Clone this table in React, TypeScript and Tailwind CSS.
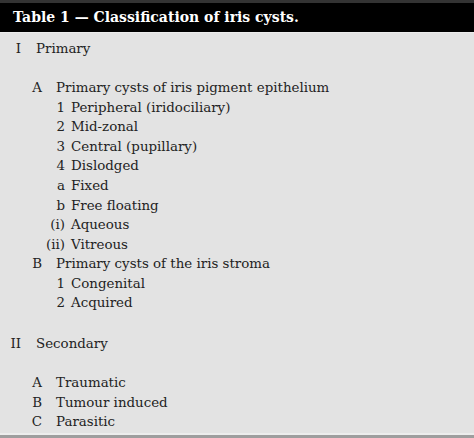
import React from "react";

type Row = { kind: "roman" | "letter" | "num" | "gap"; label?: string; text?: string; h?: string };

const rows: Row[] = [
  { kind: "roman", label: "I", text: "Primary" },
  { kind: "gap" },
  { kind: "letter", label: "A", text: "Primary cysts of iris pigment epithelium" },
  { kind: "num", label: "1", text: "Peripheral (iridociliary)" },
  { kind: "num", label: "2", text: "Mid-zonal" },
  { kind: "num", label: "3", text: "Central (pupillary)" },
  { kind: "num", label: "4", text: "Dislodged" },
  { kind: "num", label: "a", text: "Fixed" },
  { kind: "num", label: "b", text: "Free floating" },
  { kind: "num", label: "(i)", text: "Aqueous" },
  { kind: "num", label: "(ii)", text: "Vitreous" },
  { kind: "letter", label: "B", text: "Primary cysts of the iris stroma" },
  { kind: "num", label: "1", text: "Congenital" },
  { kind: "num", label: "2", text: "Acquired" },
  { kind: "gap", h: "big" },
  { kind: "roman", label: "II", text: "Secondary" },
  { kind: "gap" },
  { kind: "letter", label: "A", text: "Traumatic" },
  { kind: "letter", label: "B", text: "Tumour induced" },
  { kind: "letter", label: "C", text: "Parasitic" },
];

function RowView({ r }: { r: Row }) {
  if (r.kind === "gap")
    return r.h === "big" ? <div className="h-[21px]" /> : <div className="h-[19.6px]" />;
  if (r.kind === "roman")
    return (
      <div className="flex h-[19.6px] items-center">
        <span className="w-[21px] text-right">{r.label}</span>
        <span className="ml-[15px]">{r.text}</span>
      </div>
    );
  if (r.kind === "letter")
    return (
      <div className="flex h-[19.6px] items-center">
        <span className="w-[42px] text-right">{r.label}</span>
        <span className="ml-[14px]">{r.text}</span>
      </div>
    );
  return (
    <div className="flex h-[19.6px] items-center">
      <span className="w-[65px] text-right">{r.label}</span>
      <span className="ml-[6px]">{r.text}</span>
    </div>
  );
}

export default function App() {
  return (
    <div
      className="w-[474px] h-[438px] overflow-hidden bg-[#e3e3e3] flex flex-col"
      style={{ fontFamily: '"DejaVu Serif", serif' }}
    >
      <div className="h-[3px] bg-[#333333]" />
      <div className="h-[29px] bg-black flex items-center pl-[13px] text-white font-bold text-[14px]">
        Table 1 — Classification of iris cysts.
      </div>
      <div className="h-[1px] bg-[#ececec]" />
      <div className="flex-1 flex flex-col pt-[6px] text-[13.4px] text-[#222222]">
        {rows.map((r, i) => (
          <RowView key={i} r={r} />
        ))}
      </div>
      <div className="h-[2px] bg-[#ededed]" />
      <div className="h-[3px] bg-[#9e9e9e]" />
    </div>
  );
}
